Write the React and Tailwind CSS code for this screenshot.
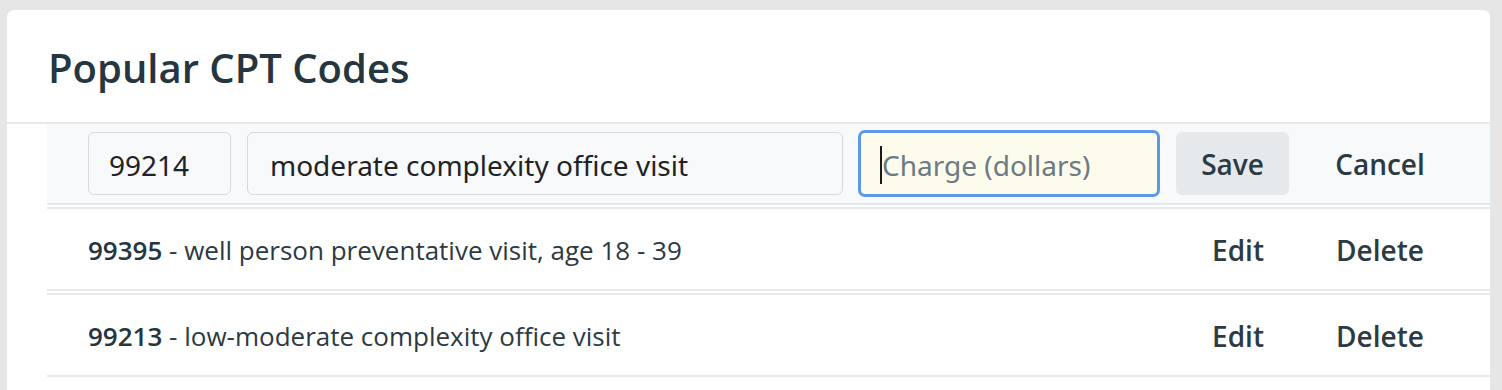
import React from "react";

const rows = [
  { code: "99395", desc: "well person preventative visit, age 18 - 39" },
  { code: "99213", desc: "low-moderate complexity office visit" },
];

export default function App() {
  return (
    <div
      className="w-[1502px] h-[390px] overflow-hidden bg-[#e6e6e6] pt-[10px] pl-[7px] pr-[11px]"
      style={{ fontFamily: '"Open Sans", "Noto Sans", sans-serif' }}
    >
      <div className="bg-white rounded-t-[7px] h-[400px] border-r border-[#e3e8ec]">
        <div className="h-[114px] border-b-2 border-[#e5e9ec] pl-[41px] pt-[32px]">
          <h1 className="text-[40px] leading-[52px] font-semibold text-[#263640] m-0">
            Popular CPT Codes
          </h1>
        </div>
        <ul className="pl-[40px] m-0 list-none">
          <li className="bg-[#f8f9fa] h-[81px] border-b-2 border-[#e5e9ec] mb-[2px] flex items-center pl-[41px] pr-[40px]">
            <input
              readOnly
              value="99214"
              className="w-[143px] h-[63px] rounded-[6px] border border-[#d5dadd] bg-[#f8f9fa] px-[20px] pt-[2px] text-[28px] text-[#1f2326] outline-none"
              style={{ fontFamily: '"Noto Sans", sans-serif' }}
            />
            <input
              readOnly
              value="moderate complexity office visit"
              className="ml-[16px] w-[596px] h-[63px] rounded-[6px] border border-[#d5dadd] bg-[#f8f9fa] px-[22px] pt-[2px] text-[28px] text-[#1f2326] outline-none"
              style={{ fontFamily: '"Noto Sans", sans-serif' }}
            />
            <div className="ml-[15px] w-[302px] h-[67px] rounded-[7px] border-[3px] border-[#5b99e8] bg-[#fdfbec] flex items-center pl-[19px] pt-[2px]">
              <span className="w-[2px] h-[38px] bg-[#1a1a1a]" />
              <span className="text-[28px] text-[#6b7a84]" style={{ fontFamily: '"Noto Sans", sans-serif' }}>
                Charge (dollars)
              </span>
            </div>
            <button className="ml-[16px] w-[113px] h-[63px] rounded-[6px] bg-[#e5e9ec] text-[28px] font-semibold text-[#2c3a42]">
              Save
            </button>
            <button className="ml-auto w-[140px] h-[63px] text-[28px] font-semibold text-[#2c3a42]">
              Cancel
            </button>
          </li>
          {rows.map((r) => (
            <li
              key={r.code}
              className="h-[84px] border-t-2 border-b-2 border-[#e5e9ec] mb-[2px] flex items-center pl-[41px] pr-[40px] pt-[2px]"
            >
              <span className="text-[26px] text-[#2c3a42]">
                <span className="font-semibold text-[#263640]">{r.code}</span> - {r.desc}
              </span>
              <button className="ml-auto w-[104px] h-[60px] text-[28px] font-semibold text-[#2c3a42]">
                Edit
              </button>
              <button className="ml-[20px] w-[140px] h-[60px] text-[28px] font-semibold text-[#2c3a42]">
                Delete
              </button>
            </li>
          ))}
        </ul>
      </div>
    </div>
  );
}
